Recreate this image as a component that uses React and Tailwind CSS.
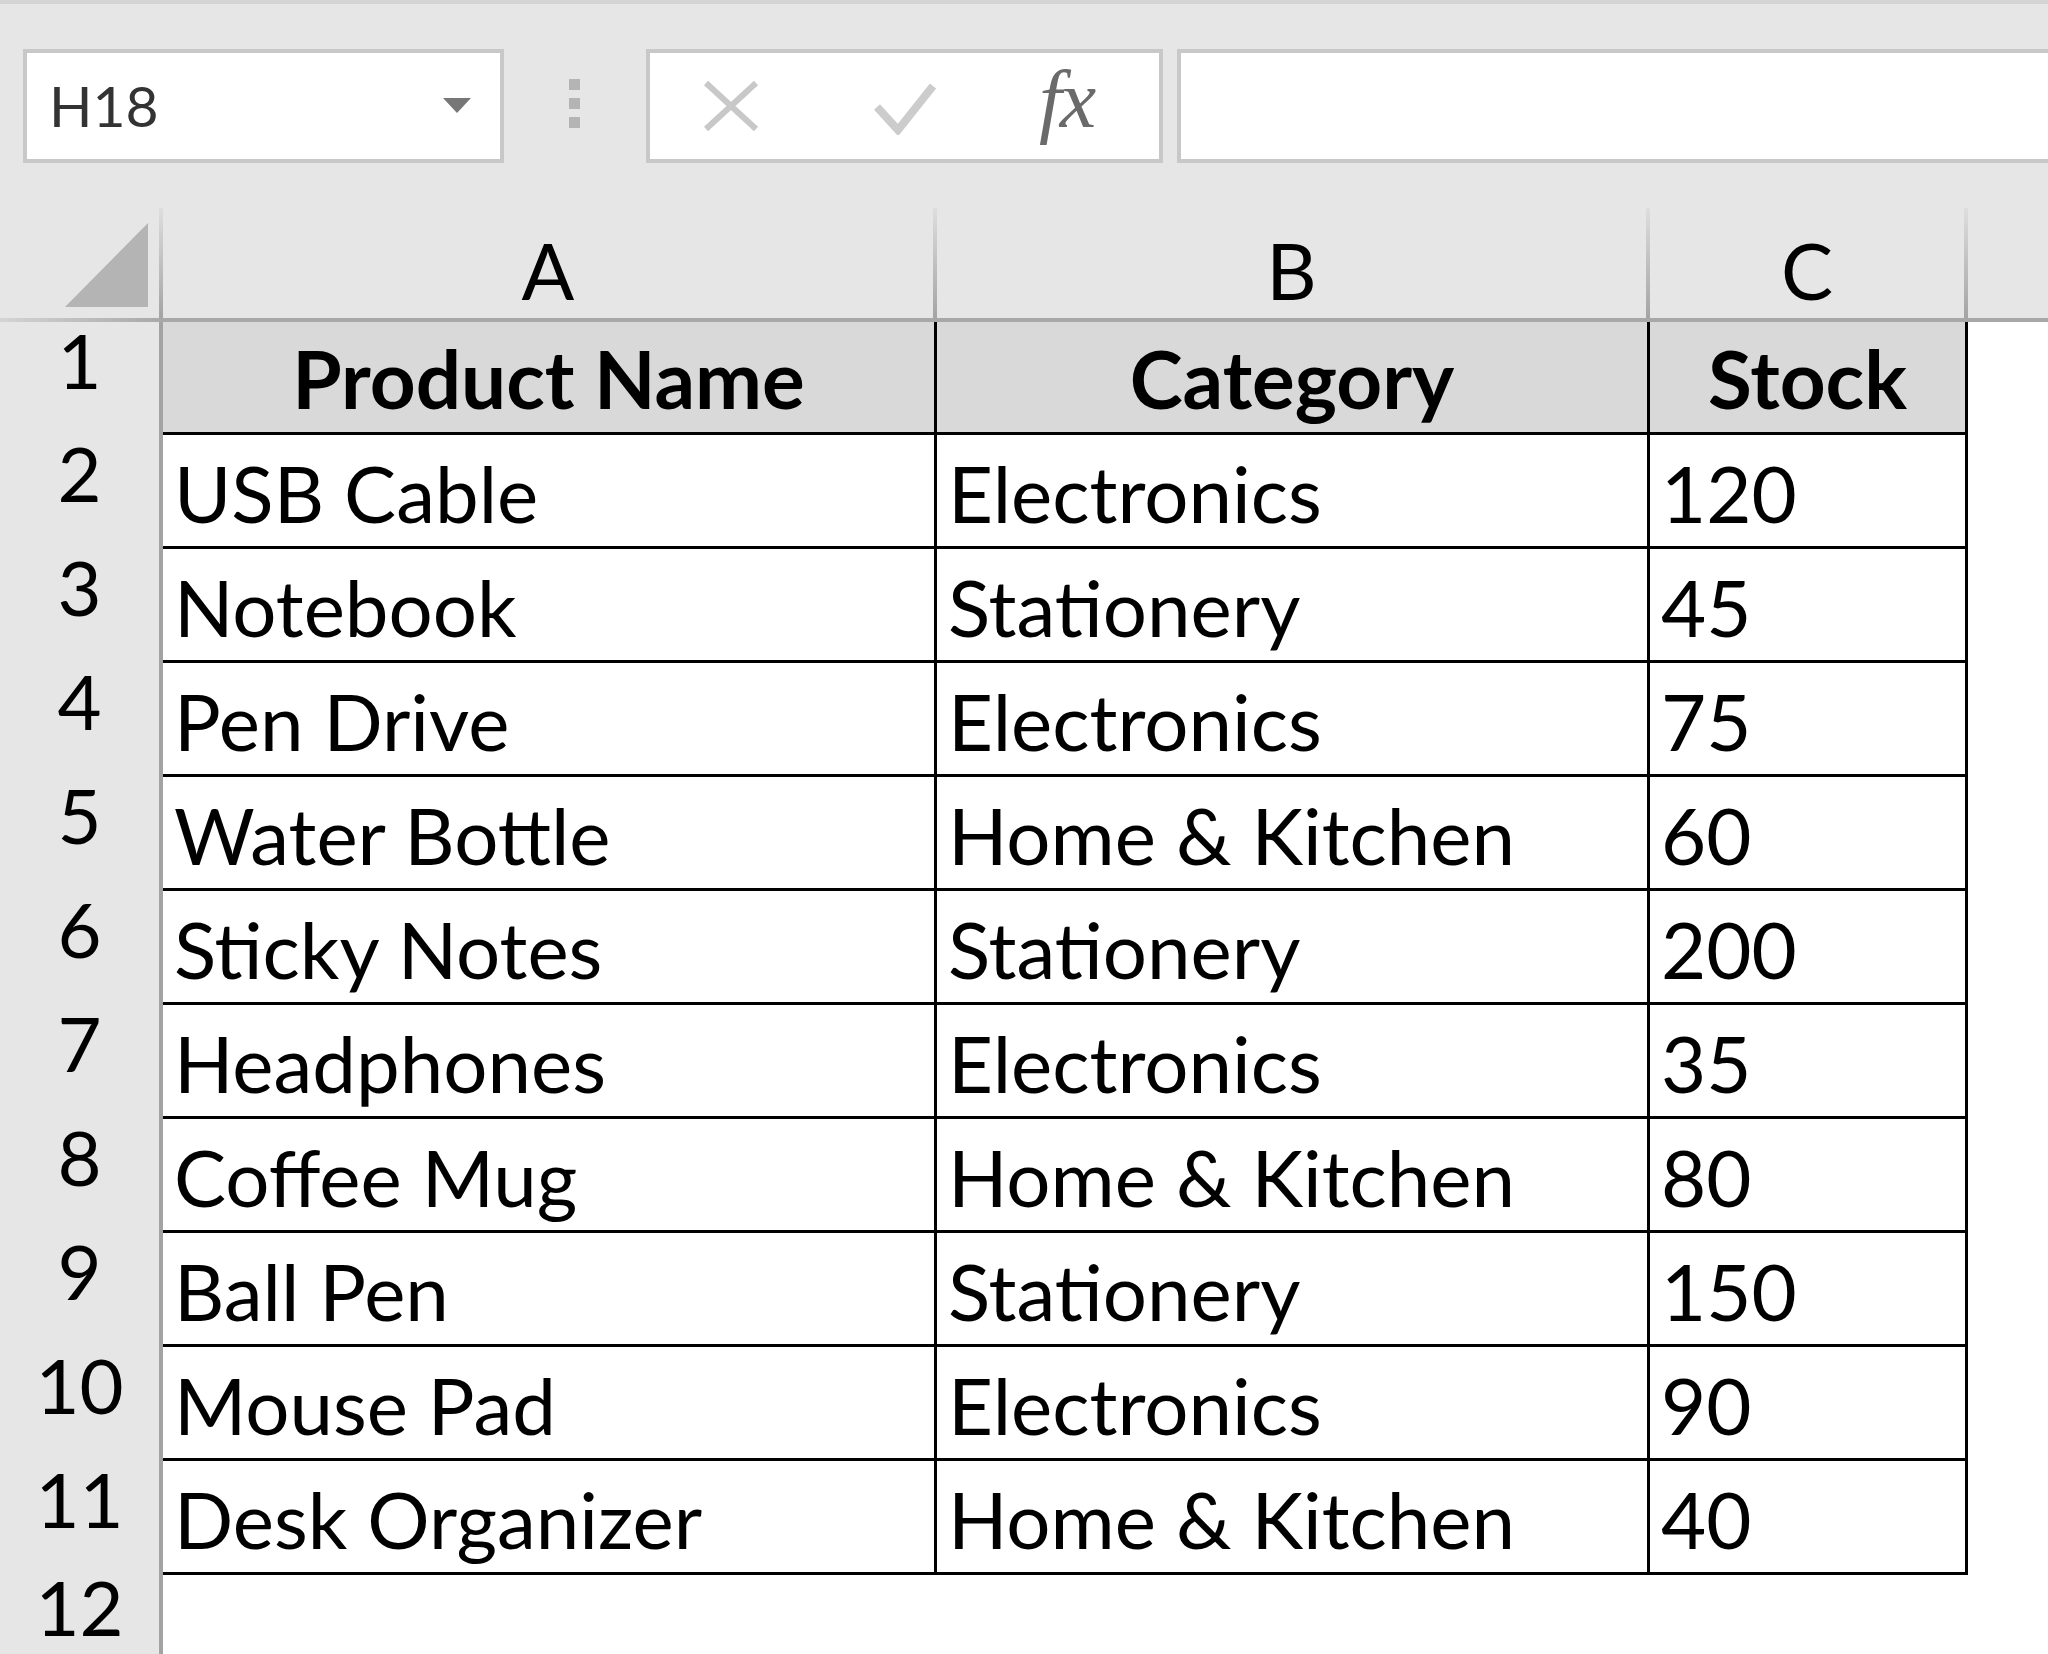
import React from "react";

const rows = [
  ["USB Cable", "Electronics", "120"],
  ["Notebook", "Stationery", "45"],
  ["Pen Drive", "Electronics", "75"],
  ["Water Bottle", "Home & Kitchen", "60"],
  ["Sticky Notes", "Stationery", "200"],
  ["Headphones", "Electronics", "35"],
  ["Coffee Mug", "Home & Kitchen", "80"],
  ["Ball Pen", "Stationery", "150"],
  ["Mouse Pad", "Electronics", "90"],
  ["Desk Organizer", "Home & Kitchen", "40"],
];

function RowHeader({ n, h }) {
  return (
    <div className={`w-[163px] shrink-0 flex ${h}`}>
      <div className="w-[159px] flex flex-col">
        <div className="flex-1 flex items-end justify-center pb-[42px] text-[76px] leading-none">{n}</div>
        <div className="h-[3px] bg-linear-to-r from-[#d8d8d8] to-[#acacac]" />
      </div>
      <div className="w-[4px] bg-[#a3a3a3]" />
    </div>
  );
}

function DataRow({ n, cells, first }) {
  const h = first ? "h-[113px]" : "h-[114px]";
  const cellBase = first
    ? "bg-[#d9d9d9] font-bold justify-center text-[80px]"
    : "bg-white justify-start pl-[11px] text-[78px]";
  return (
    <div className={`flex ${h}`}>
      <RowHeader n={n} h={h} />
      <div className={`w-[774px] shrink-0 flex items-end pb-[14px] border-r-[3px] border-b-[3px] border-black leading-none ${cellBase}`}>
        {cells[0]}
      </div>
      <div className={`w-[713px] shrink-0 flex items-end pb-[14px] border-r-[3px] border-b-[3px] border-black leading-none ${cellBase}`}>
        {cells[1]}
      </div>
      <div className={`w-[318px] shrink-0 flex items-end pb-[14px] border-r-[3px] border-b-[3px] border-black leading-none ${cellBase}`}>
        {cells[2]}
      </div>
      <div className="flex-1 bg-white" />
    </div>
  );
}

export default function App() {
  return (
    <div className="w-[2048px] h-[1654px] overflow-hidden bg-[#e6e6e6] text-black [font-family:Lato,sans-serif]">
      <div className="h-[4px] bg-[#d4d4d4]" />
      {/* formula bar */}
      <div className="h-[204px] flex items-start pt-[45px]">
        <div className="ml-[23px] w-[481px] h-[114px] shrink-0 border-4 border-[#c8c8c8] bg-white flex items-end justify-between">
          <span className="pl-[22px] pb-[25px] text-[57px] leading-none text-[#333333]">H18</span>
          <svg className="mr-[29px] mb-[46px]" width="28" height="15" viewBox="0 0 28 15">
            <path d="M0 0H28L14 15Z" fill="#777777" />
          </svg>
        </div>
        <div className="ml-[65px] mt-[30px] flex flex-col gap-[8px] shrink-0">
          <div className="w-[11px] h-[11px] bg-[#b4b4b4]" />
          <div className="w-[11px] h-[11px] bg-[#b4b4b4]" />
          <div className="w-[11px] h-[11px] bg-[#b4b4b4]" />
        </div>
        <div className="ml-[66px] w-[517px] h-[114px] shrink-0 border-4 border-[#c8c8c8] bg-white flex items-center">
          <svg className="ml-[52px]" width="58" height="52" viewBox="0 0 58 52">
            <path d="M4 3L54 49M54 3L4 49" stroke="#c8c8c8" strokeWidth="6" fill="none" />
          </svg>
          <svg className="ml-[113px] mt-[5px]" width="64" height="53" viewBox="0 0 64 53">
            <path d="M4 25L25 48L60 4" stroke="#cccccc" strokeWidth="8" fill="none" />
          </svg>
          <span className="ml-[102px] -mt-[12px] text-[82px] leading-none italic text-[#6a6a6a] tracking-[-2px] [font-family:'Liberation_Serif',serif]">
            fx
          </span>
        </div>
        <div className="ml-[14px] w-[900px] h-[114px] shrink-0 border-4 border-[#c8c8c8] bg-white" />
      </div>

      {/* column headers */}
      <div className="flex flex-col h-[114px]">
        <div className="flex h-[110px]">
          <div className="w-[159px] shrink-0 flex items-end justify-end pr-[11px] pb-[11px]">
            <svg width="83" height="84" viewBox="0 0 83 84">
              <path d="M83 0V84H0Z" fill="#b4b4b4" />
            </svg>
          </div>
          <div className="w-[4px] bg-linear-to-b from-[#dedede] to-[#a4a4a4]" />
          <div className="w-[770px] shrink-0 flex items-end justify-center pb-[9px] text-[78px] leading-none">A</div>
          <div className="w-[4px] bg-linear-to-b from-[#dedede] to-[#a4a4a4]" />
          <div className="w-[709px] shrink-0 flex items-end justify-center pb-[9px] text-[78px] leading-none">B</div>
          <div className="w-[4px] bg-linear-to-b from-[#dedede] to-[#a4a4a4]" />
          <div className="w-[314px] shrink-0 flex items-end justify-center pb-[9px] text-[78px] leading-none">C</div>
          <div className="w-[4px] bg-linear-to-b from-[#dedede] to-[#a4a4a4]" />
          <div className="flex-1" />
        </div>
        <div className="flex h-[4px]">
          <div className="w-[163px] bg-linear-to-r from-[#d4d4d4] to-[#a8a8a8]" />
          <div className="flex-1 bg-[#a8a8a8]" />
        </div>
      </div>

      {/* rows */}
      <DataRow n={1} cells={["Product Name", "Category", "Stock"]} first />
      {rows.map((r, i) => (
        <DataRow key={i} n={i + 2} cells={r} />
      ))}
      <div className="flex h-[79px]">
        <div className="w-[163px] shrink-0 flex">
          <div className="w-[159px] flex items-start justify-center text-[76px] leading-none">
            <span className="-mt-[6px]">12</span>
          </div>
          <div className="w-[4px] bg-[#a3a3a3]" />
        </div>
        <div className="flex-1 bg-white" />
      </div>
    </div>
  );
}
